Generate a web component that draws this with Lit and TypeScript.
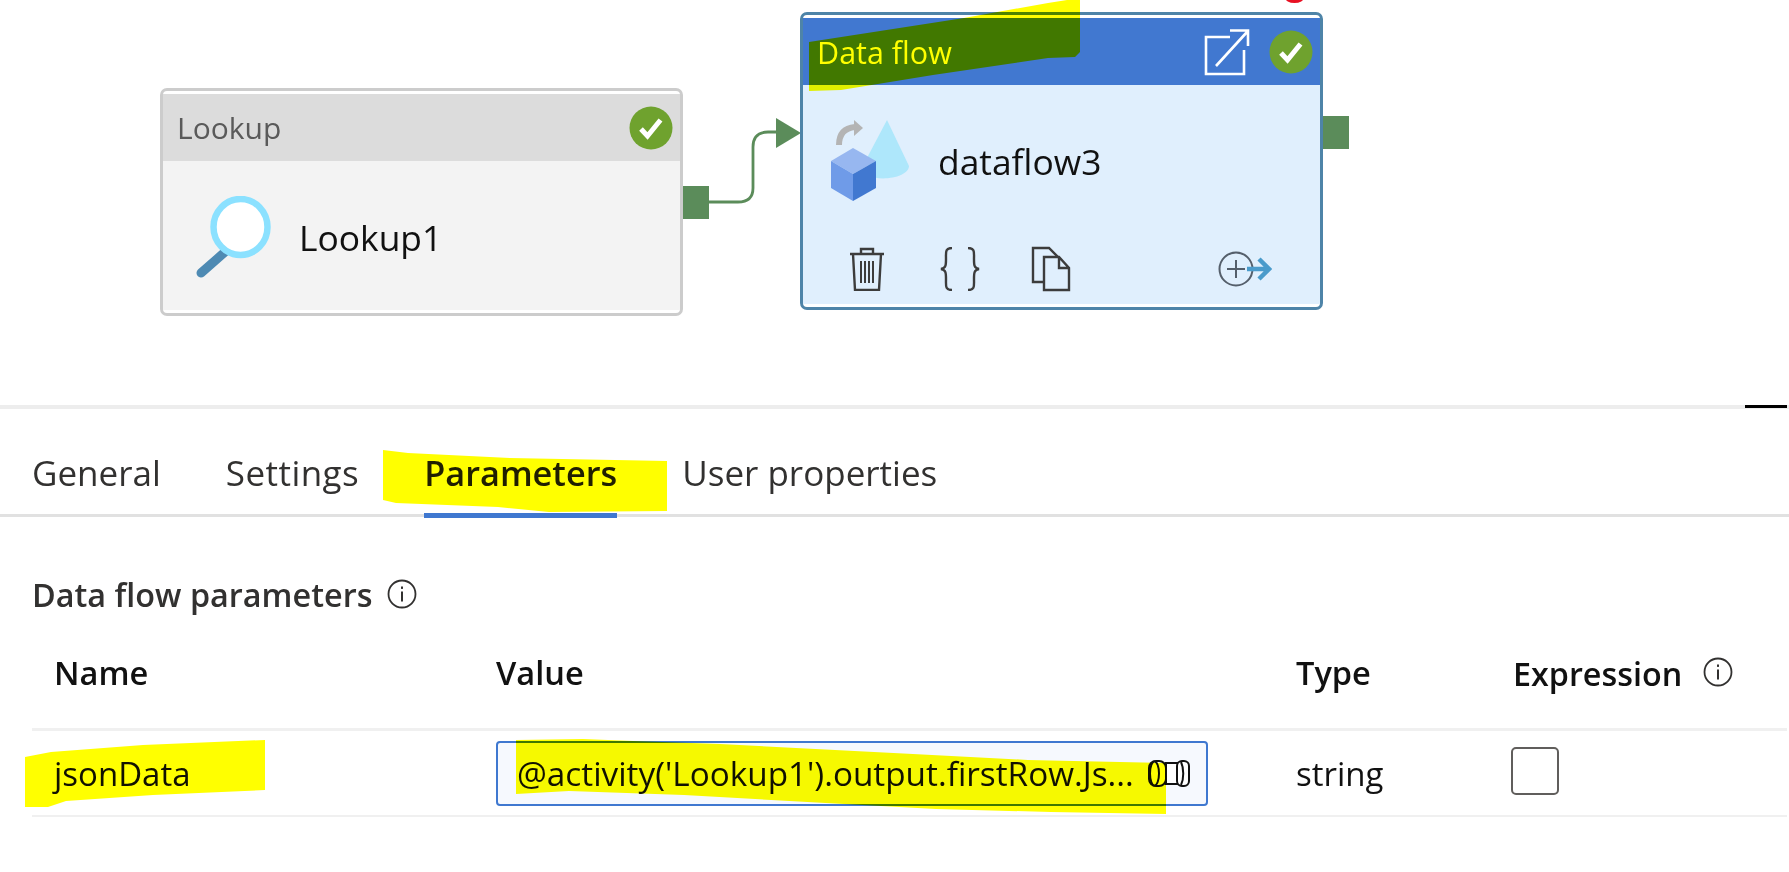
import { LitElement, html, css, svg } from "lit";
import { customElement } from "lit/decorators.js";

const check = svg`<path d="M-10 1 L-3.5 8 L9.5 -8" fill="none" stroke="#fff" stroke-width="5" />`;

@customElement("app-root")
export class AppRoot extends LitElement {
  static styles = css`
    :host {
      display: block;
      position: relative;
      width: 1789px;
      height: 872px;
      overflow: hidden;
      background: #fff;
      font-family: "Open Sans", "Noto Sans", sans-serif;
      color: #323130;
    }
    .canvas { position: relative; height: 405px; }
    .wires { position: absolute; inset: 0; width: 1789px; height: 405px; }
    .node {
      position: absolute;
      box-sizing: border-box;
      width: 523px;
      border: 3px solid #cccccc;
      border-radius: 7px;
      padding: 3px 0;
      background: #fff;
      display: flex;
      flex-direction: column;
    }
    .lookup { left: 160px; top: 88px; height: 228px; }
    .flow { left: 800px; top: 12px; height: 298px; border-color: #4e84a8; }
    .head {
      height: 67px;
      flex: none;
      display: flex;
      align-items: center;
      padding: 0 7px 0 14px;
      font-size: 30px;
      background: #dcdcdc;
      color: #5a5a5a;
    }
    .flow .head { background: #4178d0; color: #fff; font-size: 30.5px; }
    .head .t { flex: 1; }
    .body { flex: 1; background: #f3f3f3; }
    .flow .body { background: #e0effd; }
    .main {
      display: flex;
      align-items: center;
      color: #111;
      font-size: 35.4px;
    }
    .lookup .main { padding: 35px 0 0 32px; gap: 27px; }
    .flow .main { padding: 35px 0 0 27px; gap: 28px; }
    .tools {
      display: flex;
      align-items: center;
      padding: 44px 0 0 46px;
    }
    .tools svg { display: block; }
    .gap-a { margin-left: 55px; }
    .gap-b { margin-left: 51px; }
    .gap-c { margin-left: 147px; }
    .ext { margin-right: 19px; }
    .port {
      position: absolute;
      width: 26px;
      height: 33px;
      background: #5b8c5a;
    }
    .p1 { left: 683px; top: 186px; }
    .p2 { left: 1323px; top: 116px; }
    .dot {
      position: absolute;
      left: 1285px;
      top: -8px;
      width: 19px;
      height: 11px;
      border-radius: 50%;
      background: #e81123;
    }
    .rule {
      height: 4px;
      background: #ededed;
      position: relative;
    }
    .rule i {
      position: absolute;
      left: 1745px;
      top: 0;
      width: 42px;
      height: 3px;
      background: #000;
    }
    .tabs {
      display: flex;
      height: 108px;
      box-sizing: border-box;
      padding: 0 0 0 32px;
      gap: 65px;
      border-bottom: 3px solid #e1e1e1;
      font-size: 35px;
    }
    .tab {
      display: flex;
      align-items: center;
      padding-top: 21px;
      height: 105px;
      box-sizing: border-box;
      white-space: nowrap;
    }
    .tab.spaced { letter-spacing: 0.45px; }
    .tab.on {
      font-weight: 600;
      font-size: 34.3px;
      height: 109px;
      border-bottom: 5px solid #3f78d0;
      padding-top: 22px;
      color: #201f1e;
    }
    .section {
      display: flex;
      align-items: center;
      gap: 15px;
      padding: 57px 0 0 32px;
      font-size: 32.4px;
      font-weight: 600;
      height: 40px;
      color: #323130;
    }
    .grid {
      display: grid;
      grid-template-columns: 464px 800px 217px 1fr;
      margin: 0 2px 0 32px;
    }
    .th {
      height: 117px;
      box-sizing: border-box;
      padding-top: 39px;
      font-size: 32.6px;
      font-weight: 600;
      color: #111;
      line-height: 40px;
      display: flex;
      align-items: flex-start;
      gap: 21px;
      border-bottom: 3px solid #f0f0f0;
    }
    .th svg { margin-top: 4px; }
    .th .expr { font-size: 32.3px; }
    .td {
      height: 86px;
      box-sizing: border-box;
      display: flex;
      align-items: center;
      font-size: 33px;
      color: #111;
      border-bottom: 2px solid #f0f0f0;
    }
    .first { padding-left: 22px; }
    .input {
      box-sizing: border-box;
      width: 712px;
      height: 65px;
      border: 2px solid #3f78d0;
      border-radius: 4px;
      background: #f6f9fe;
      display: flex;
      align-items: center;
      padding: 0 16px 0 19px;
      white-space: nowrap;
      justify-content: space-between;
      font-size: 33.3px;
    }
    .box {
      box-sizing: border-box;
      width: 48px;
      height: 48px;
      border: 2px solid #605e5c;
      border-radius: 5px;
      background: #fff;
      margin: -4px 0 0 -2px;
    }
    .marks {
      position: absolute;
      left: 0;
      top: 0;
      width: 1789px;
      height: 872px;
      mix-blend-mode: multiply;
      pointer-events: none;
    }
  `;

  private info() {
    return html`<svg width="30" height="30" viewBox="0 0 30 30">
      <circle cx="15" cy="15" r="13.5" fill="none" stroke="#323130" stroke-width="1.8" />
      <rect x="14" y="12.5" width="2" height="10" fill="#323130" />
      <rect x="14" y="7.5" width="2" height="2.4" fill="#323130" />
    </svg>`;
  }

  private status() {
    return html`<svg width="44" height="44" viewBox="-22 -22 44 44">
      <circle r="21.5" fill="#6fa22e" />${check}
    </svg>`;
  }

  render() {
    return html`
      <div class="canvas">
        <svg class="wires" viewBox="0 0 1789 405">
          <path d="M709 202 H738 Q753 202 753 188 V147 Q753 132 768 132 H778" fill="none" stroke="#5b8c5a" stroke-width="2.8" />
          <path d="M776 118 L801 133 L776 148 Z" fill="#5b8c5a" />
        </svg>
        <div class="dot"></div>

        <div class="node lookup">
          <div class="head"><span class="t">Lookup</span>${this.status()}</div>
          <div class="body">
            <div class="main">
              <svg width="77" height="82" viewBox="0 0 77 82">
                <path d="M31 55 L6 77" stroke="#4e8ab3" stroke-width="9" stroke-linecap="round" />
                <ellipse cx="45.5" cy="31" rx="27" ry="28" fill="#fff" stroke="#8be1ff" stroke-width="6.5" />
              </svg>
              <span>Lookup1</span>
            </div>
          </div>
        </div>

        <div class="node flow">
          <div class="head">
            <span class="t">Data flow</span>
            <svg class="ext" width="46" height="48" viewBox="0 0 46 48">
              <path d="M26 9 H2 V46 H40 V22" fill="none" stroke="#fff" stroke-width="2.6" />
              <path d="M12 38 L43 4 M26 2.5 H44 V18" fill="none" stroke="#fff" stroke-width="2.6" />
            </svg>
            ${this.status()}
          </div>
          <div class="body">
            <div class="main">
              <svg width="80" height="82" viewBox="0 0 80 82">
                <path d="M57 0 L79 46 C79 56 55 62 38 56 V36 Z" fill="#aee7fb" />
                <path d="M9 25 C9 14 14 8 25 7" fill="none" stroke="#b4b4b4" stroke-width="6" />
                <path d="M24 0 L33 8 L24 16 Z" fill="#b4b4b4" />
                <path d="M23 28 L46 41 L23 54 L1 41 Z" fill="#97b7f0" />
                <path d="M1 41 L23 54 V81 L1 68 Z" fill="#6f9be8" />
                <path d="M46 41 L23 54 V81 L46 68 Z" fill="#4178d0" />
              </svg>
              <span>dataflow3</span>
            </div>
            <div class="tools">
              <svg width="36" height="44" viewBox="0 0 36 44" fill="none" stroke="#3c3c3c" stroke-width="2.4">
                <path d="M1 7 H35 M12 7 V2 H24 V7 M4 7 L6 43 H30 L32 7" />
                <path d="M12 14 V36 M16 14 V36 M20 14 V36 M24 14 V36" stroke-width="2" />
              </svg>
              <svg class="gap-a" width="40" height="44" viewBox="0 0 40 44" fill="none" stroke="#3c3c3c" stroke-width="2.4">
                <path d="M12 1 C5 1 6 5 6 12 C6 18 6 21 1 22 C6 23 6 26 6 32 C6 39 5 43 12 43" />
                <path d="M28 1 C35 1 34 5 34 12 C34 18 34 21 39 22 C34 23 34 26 34 32 C34 39 35 43 28 43" />
              </svg>
              <svg class="gap-b" width="40" height="46" viewBox="0 0 40 46" fill="none" stroke="#3c3c3c" stroke-width="2.4">
                <path d="M13 36 H2 V2 H18 L27 11" />
                <path d="M13 11 H28 L38 22 V44 H13 Z M28 11 V22 H38" />
              </svg>
              <svg class="gap-c" width="54" height="38" viewBox="0 0 54 38" fill="none">
                <circle cx="18" cy="19" r="16.5" stroke="#555f6b" stroke-width="2" />
                <path d="M9 19 H27 M18 10 V28" stroke="#555f6b" stroke-width="2" />
                <path d="M29 19 H50 M41 9 L51 19 L41 29" stroke="#4a9bcb" stroke-width="4.5" />
              </svg>
            </div>
          </div>
        </div>

        <div class="port p1"></div>
        <div class="port p2"></div>
      </div>

      <div class="rule"><i></i></div>

      <div class="tabs">
        <div class="tab">General</div>
        <div class="tab spaced">Settings</div>
        <div class="tab on">Parameters</div>
        <div class="tab">User properties</div>
      </div>

      <div class="section"><span>Data flow parameters</span>${this.info()}</div>

      <div class="grid">
        <div class="th first">Name</div>
        <div class="th">Value</div>
        <div class="th">Type</div>
        <div class="th"><span class="expr">Expression</span>${this.info()}</div>
        <div class="td first">jsonData</div>
        <div class="td">
          <div class="input">
            <span>@activity('Lookup1').output.firstRow.Js...</span>
            <svg width="42" height="27" viewBox="0 0 42 27" fill="#fff" stroke="#111" stroke-width="2">
              <rect x="18" y="3" width="12" height="21" />
              <rect x="29" y="1" width="12" height="25" rx="5" />
              <path d="M33 2 C36 8 36 19 33 25" fill="none" />
              <rect x="1" y="1" width="17" height="25" rx="7" />
              <ellipse cx="6.5" cy="13.5" rx="4.5" ry="12" />
            </svg>
          </div>
        </div>
        <div class="td">string</div>
        <div class="td"><div class="box"></div></div>
      </div>

      <svg class="marks" viewBox="0 0 1789 872">
        <g fill="#ffff00">
          <path d="M809 42 L964 18 L1048 3 L1067 0 H1080 V52 L1075 57 L1048 58 L933 75 L841 90 L809 91 Z" />
          <path d="M383 450 L408 453 L510 458 L667 461 V511 L549 512 L498 507 L396 503 L383 500 Z" />
          <path d="M25 757 L51 752 L143 745 L265 740 V790 L153 795 L66 801 L48 807 H25 Z" />
          <path d="M516 740 L583 739 L633 741 L720 744 L913 754 L1028 760 L1166 763 V814 L1051 812 L936 809 L844 804 L684 795 L569 791 L516 794 Z" />
        </g>
      </svg>
    `;
  }
}
